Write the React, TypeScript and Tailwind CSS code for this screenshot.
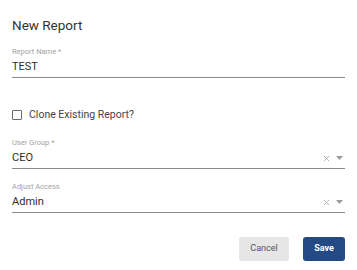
import React from 'react'

const font = { fontFamily: 'Roboto, "Liberation Sans", sans-serif' }

function ClearCaret() {
  return (
    <div className="flex items-center gap-[6px] pr-[2px]">
      <svg width="7" height="7" viewBox="0 0 7 7" className="text-[#b5b5b5]">
        <path d="M1 1 L6 6 M6 1 L1 6" stroke="currentColor" strokeWidth="1" />
      </svg>
      <svg width="7" height="4" viewBox="0 0 7 4" className="text-[#9a9a9a]">
        <path d="M0 0 H7 L3.5 4 Z" fill="currentColor" />
      </svg>
    </div>
  )
}

function Field({ label, value, select }: { label: string; value: string; select?: boolean }) {
  return (
    <div className="flex flex-col">
      <label className="text-[7.5px] leading-[10px] text-[#a3a3a3]">{label}</label>
      <div className="flex items-center justify-between h-[21px] border-b border-[#8a8a8a]">
        <span className="text-[11px] text-[#2e2e2e] leading-[14px]">{value}</span>
        {select && <ClearCaret />}
      </div>
    </div>
  )
}

export default function App() {
  return (
    <div className="w-[357px] h-[270px] bg-white px-[12px] pt-[16px]" style={font}>
      <h2 className="text-[13.5px] leading-[18px] text-[#333] font-normal">New Report</h2>

      <div className="mt-[13px]">
        <Field label="Report Name *" value="TEST" />
      </div>

      <label className="flex items-center gap-[7px] mt-[30px]">
        <span className="w-[10px] h-[10px] border border-[#6b6b6b] rounded-[1px] bg-white" />
        <span className="text-[10.5px] text-[#444] leading-[14px]">Clone Existing Report?</span>
      </label>

      <div className="mt-[16px] flex flex-col gap-[13px]">
        <Field label="User Group *" value="CEO" select />
        <Field label="Adjust Access" value="Admin" select />
      </div>

      <div className="flex justify-end gap-[14px] mt-[24px]">
        <button className="w-[50px] h-[24px] rounded-[3px] bg-[#e6e6e6] text-[9px] text-[#555]">Cancel</button>
        <button className="w-[42px] h-[24px] rounded-[3px] bg-[#234a84] text-[9px] font-bold text-white">Save</button>
      </div>
    </div>
  )
}
